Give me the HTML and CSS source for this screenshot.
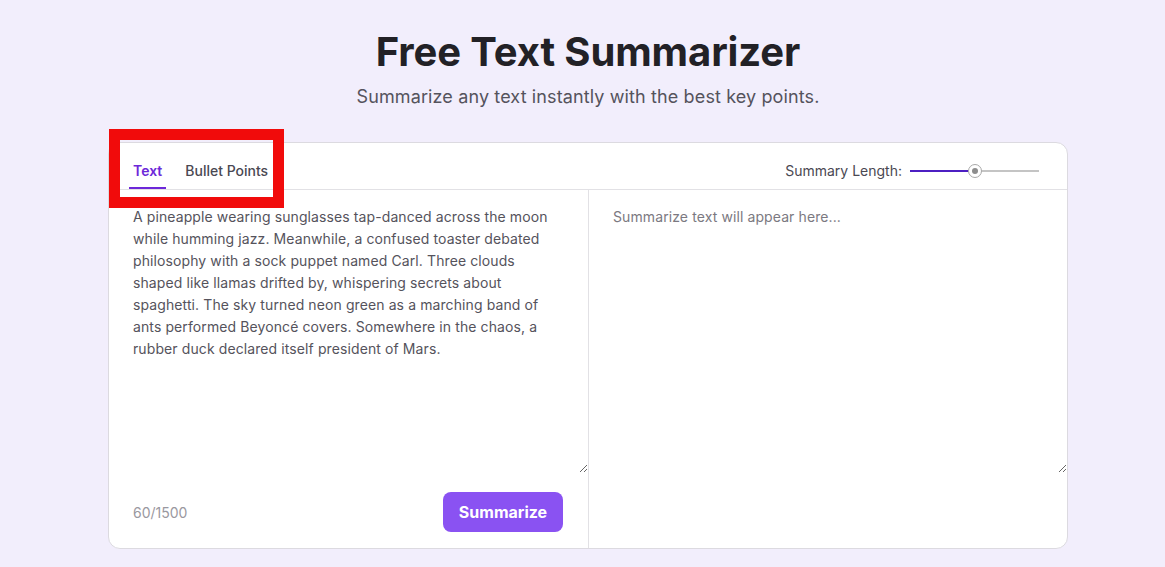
FILE: index.html
```html
<!DOCTYPE html>
<html lang="en">
<head>
    <meta charset="UTF-8">
    <meta name="viewport" content="width=device-width, initial-scale=1.0">
    <title>Free Text Summarizer</title>
    <link rel="stylesheet" href="styles.css">
</head>
<body>
    <div class="page">
        <h1 class="title">Free Text Summarizer</h1>
        <p class="subtitle">Summarize any text instantly with the best key points.</p>

        <div class="card">
            <div class="card-head">
                <div class="tabs">
                    <div class="tab active">Text</div>
                    <div class="tab">Bullet Points</div>
                </div>
                <div class="length">
                    <span>Summary Length:</span>
                    <div class="slider">
                        <div class="slider-fill"></div>
                        <div class="slider-thumb"></div>
                    </div>
                </div>
                <div class="highlight"></div>
            </div>

            <div class="card-body">
                <div class="pane pane-left">
                    <textarea class="input">A pineapple wearing sunglasses tap-danced across the moon while humming jazz. Meanwhile, a confused toaster debated philosophy with a sock puppet named Carl. Three clouds shaped like llamas drifted by, whispering secrets about spaghetti. The sky turned neon green as a marching band of ants performed Beyoncé covers. Somewhere in the chaos, a rubber duck declared itself president of Mars.</textarea>
                    <div class="pane-foot">
                        <span class="count">60/1500</span>
                        <button class="btn">Summarize</button>
                    </div>
                </div>
                <div class="pane pane-right">
                    <textarea class="input output" placeholder="Summarize text will appear here..."></textarea>
                </div>
            </div>
        </div>
    </div>
</body>
</html>
```
FILE: styles.css
```css
* { box-sizing: border-box; }

body {
    margin: 0;
    font-family: Inter, "Noto Sans", sans-serif;
    background: #f2eefc;
    color: #222;
}
.page {
    display: flex;
    flex-direction: column;
    align-items: center;
    padding: 28px 0 0 11px;
}
.title {
    margin: 0;
    font-size: 40px;
    font-weight: 700;
    color: #222126;
    line-height: 48px;
    letter-spacing: -0.1px;
}
.subtitle {
    margin: 10px 0 0;
    font-size: 18px;
    color: #55535c;
    line-height: 22px;
    letter-spacing: 0.12px;
}
.card {
    margin-top: 34px;
    width: 960px;
    background: #fff;
    border: 1px solid #dcdae0;
    border-radius: 12px;
}
.card-head {
    position: relative;
    display: flex;
    justify-content: space-between;
    align-items: flex-end;
    height: 47px;
    padding: 0 28px 0 20px;
    border-bottom: 1px solid #e2e1e5;
}
.tabs { display: flex; gap: 15px; }
.tab {
    padding: 0 4px 8px;
    font-size: 14px;
    font-weight: 500;
    color: #4a4852;
    border-bottom: 2px solid transparent;
    line-height: 17px;
}
.tab.active {
    color: #6d28d9;
    font-weight: 600;
    border-bottom-color: #6d28d9;
}
.length {
    display: flex;
    align-items: center;
    gap: 8px;
    padding-bottom: 10px;
    font-size: 14px;
    color: #4a4852;
}
.slider {
    position: relative;
    width: 129px;
    height: 2px;
    background: #c4c4c4;
}
.slider-fill {
    width: 60px;
    height: 2px;
    background: #4c1fc2;
}
.slider-thumb {
    position: absolute;
    left: 58px;
    top: -6px;
    width: 14px;
    height: 14px;
    border-radius: 50%;
    background: #fff;
    border: 1px solid #a8a8a8;
}
.slider-thumb::after {
    content: "";
    position: absolute;
    left: 3px;
    top: 3px;
    width: 6px;
    height: 6px;
    border-radius: 50%;
    background: #8d8d8d;
}
.highlight {
    position: absolute;
    left: 0;
    top: -14px;
    width: 175px;
    height: 79px;
    border: 11px solid #f10b0b;
}
.card-body {
    display: grid;
    grid-template-columns: 480px 1fr;
    height: 358px;
}
.pane { display: flex; flex-direction: column; }
.pane-left { border-right: 1px solid #e2e1e5; }
.input {
    height: 283px;
    border: none;
    outline: none;
    resize: vertical;
    padding: 16px 27px 16px 24px;
    font-family: Inter, "Noto Sans", sans-serif;
    font-size: 14px;
    letter-spacing: 0.1px;
    line-height: 22px;
    color: #55535c;
    background: transparent;
}
.output::placeholder { color: #7b7981; }
.pane-foot {
    display: flex;
    justify-content: space-between;
    align-items: center;
    padding: 19px 25px 0 24px;
}
.count {
    font-size: 14px;
    color: #9a98a0;
}
.btn {
    width: 120px;
    height: 40px;
    border: none;
    border-radius: 8px;
    background: #8a52f2;
    color: #fff;
    font-family: Inter, "Noto Sans", sans-serif;
    font-size: 16px;
    font-weight: 700;
}
```
